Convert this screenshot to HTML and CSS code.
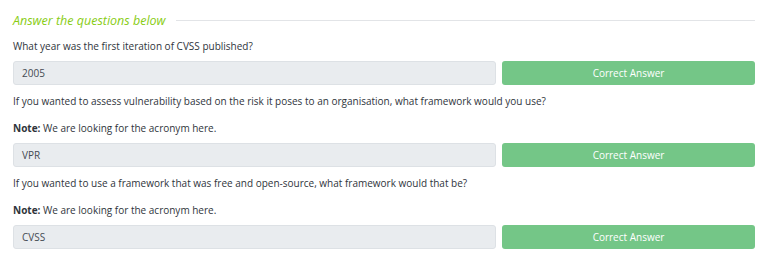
FILE: index.html
```html
<!DOCTYPE html>
<html>
<head>
<meta charset="utf-8">
<link rel="stylesheet" href="styles.css">
</head>
<body>
<div class="wrap">
  <div class="heading-row">
    <h3 class="heading">Answer the questions below</h3>
    <div class="rule"></div>
  </div>

  <div class="q">
    <p class="text">What year was the first iteration of CVSS published?</p>
    <div class="answer">
      <div class="input">2005</div>
      <div class="btn">Correct Answer</div>
    </div>
  </div>

  <div class="q">
    <p class="text">If you wanted to assess vulnerability based on the risk it poses to an organisation, what framework would you use?</p>
    <p class="text"><b>Note:</b> We are looking for the acronym here.</p>
    <div class="answer">
      <div class="input">VPR</div>
      <div class="btn">Correct Answer</div>
    </div>
  </div>

  <div class="q">
    <p class="text">If you wanted to use a framework that was free and open-source, what framework would that be?</p>
    <p class="text"><b>Note:</b> We are looking for the acronym here.</p>
    <div class="answer">
      <div class="input">CVSS</div>
      <div class="btn">Correct Answer</div>
    </div>
  </div>
</div>
</body>
</html>
```

FILE: styles.css
```css
html, body {
  margin: 0;
  padding: 0;
  background: #ffffff;
}
body {
  font-family: "Open Sans", "DejaVu Sans", sans-serif;
  color: #2f343b;
  font-size: 10px;
}
.wrap {
  padding: 10px 13px 0 13px;
  width: 742px;
}
.heading-row {
  display: flex;
  align-items: center;
  gap: 10px;
  height: 20px;
  margin-bottom: 7px;
}
.heading {
  margin: 0;
  font-size: 12.5px;
  font-style: italic;
  font-weight: 400;
  color: #88cc14;
  white-space: nowrap;
}
.rule {
  flex: 1;
  height: 1px;
  background: #e2e4e7;
}
.text {
  margin: 0 0 6px 0;
  line-height: 18px;
}
.text + .text {
  margin-top: 9px;
}
.text b {
  font-weight: 700;
}
.answer {
  display: flex;
  gap: 6px;
  height: 24px;
  margin-bottom: 7px;
}
.input {
  flex: 0 0 483px;
  box-sizing: border-box;
  background: #e9ecef;
  border: 1px solid #dde1e5;
  border-radius: 3px;
  padding: 0 8px;
  display: flex;
  align-items: center;
  color: #444a52;
}
.btn {
  flex: 1;
  background: #74c687;
  border-radius: 3px;
  color: #ffffff;
  display: flex;
  align-items: center;
  justify-content: center;
}
```
